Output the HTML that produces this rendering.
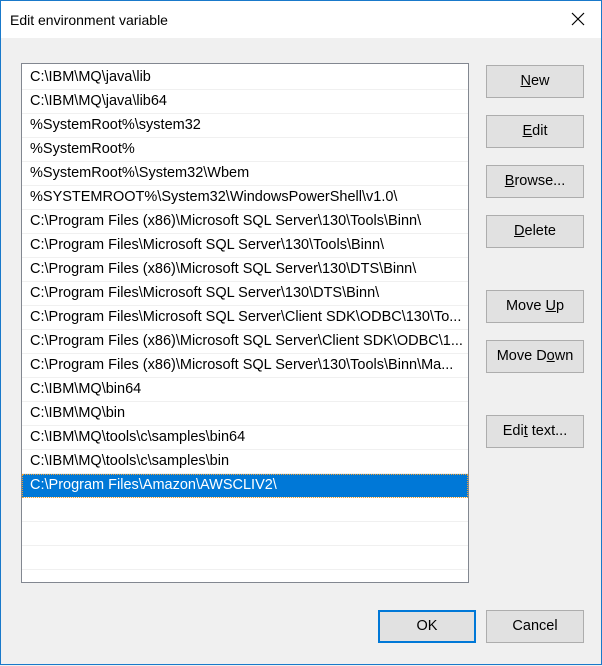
<!DOCTYPE html><html><head><style>
body{margin:0;width:602px;height:666px;overflow:hidden;background:#f0f0f0;font-family:"Liberation Sans",sans-serif;font-size:14.5px;color:#000}
.win{position:absolute;left:0;top:0;width:600px;height:663px;border:1px solid #1979ca;background:#f0f0f0}
.title{position:absolute;left:0;top:0;width:600px;height:37px;background:#fff}
.title span{position:absolute;left:9px;top:11px;font-size:14px}
.x{position:absolute;left:570px;top:11px}
.list{position:absolute;left:20px;top:62px;width:446px;height:518px;border:1px solid #828790;background:#fff;overflow:hidden}
.row{height:23px;border-bottom:1px solid #f0f0f0;padding-left:8px;line-height:23px;white-space:nowrap;overflow:hidden;width:438px}
.sel{background:#0078d7;color:#fff;outline:1px dotted #f0a030;outline-offset:-1px}
.btn{position:absolute;left:485px;width:96px;height:31px;border:1px solid #adadad;background:#e1e1e1;text-align:center;line-height:31px}
.ok{border:2px solid #0078d7;width:94px;height:29px;line-height:29px}
</style></head><body><div class="win">
<div class="title"><span>Edit environment variable</span>
<svg class="x" width="14" height="14"><path d="M1 1L13 13M13 1L1 13" stroke="#000" stroke-width="1.2"/></svg></div>
<div class="list">
<div style="height:2px"></div>
<div class="row">C:\IBM\MQ\java\lib</div>
<div class="row">C:\IBM\MQ\java\lib64</div>
<div class="row">%SystemRoot%\system32</div>
<div class="row">%SystemRoot%</div>
<div class="row">%SystemRoot%\System32\Wbem</div>
<div class="row">%SYSTEMROOT%\System32\WindowsPowerShell\v1.0\</div>
<div class="row">C:\Program Files (x86)\Microsoft SQL Server\130\Tools\Binn\</div>
<div class="row">C:\Program Files\Microsoft SQL Server\130\Tools\Binn\</div>
<div class="row">C:\Program Files (x86)\Microsoft SQL Server\130\DTS\Binn\</div>
<div class="row">C:\Program Files\Microsoft SQL Server\130\DTS\Binn\</div>
<div class="row">C:\Program Files\Microsoft SQL Server\Client SDK\ODBC\130\To...</div>
<div class="row">C:\Program Files (x86)\Microsoft SQL Server\Client SDK\ODBC\1...</div>
<div class="row">C:\Program Files (x86)\Microsoft SQL Server\130\Tools\Binn\Ma...</div>
<div class="row">C:\IBM\MQ\bin64</div>
<div class="row">C:\IBM\MQ\bin</div>
<div class="row">C:\IBM\MQ\tools\c\samples\bin64</div>
<div class="row">C:\IBM\MQ\tools\c\samples\bin</div>
<div class="row sel">C:\Program Files\Amazon\AWSCLIV2\</div>
<div class="row"></div><div class="row"></div><div class="row"></div><div class="row"></div>
</div>
<div class="btn" style="top:64px"><u>N</u>ew</div>
<div class="btn" style="top:114px"><u>E</u>dit</div>
<div class="btn" style="top:164px"><u>B</u>rowse...</div>
<div class="btn" style="top:214px"><u>D</u>elete</div>
<div class="btn" style="top:289px">Move <u>U</u>p</div>
<div class="btn" style="top:339px">Move D<u>o</u>wn</div>
<div class="btn" style="top:414px">Edi<u>t</u> text...</div>
<div class="btn ok" style="left:377px;top:609px">OK</div>
<div class="btn" style="top:609px">Cancel</div>
</div></body></html>
